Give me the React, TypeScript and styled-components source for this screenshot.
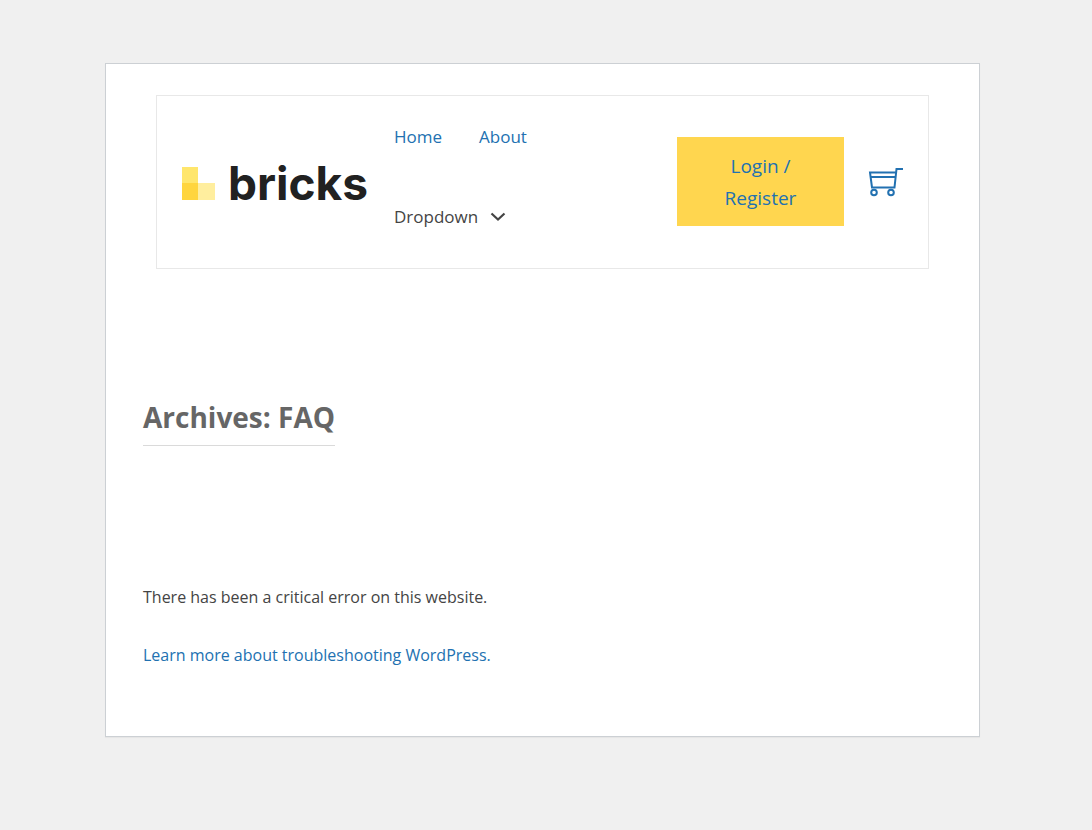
import React from "react";
import styled, { createGlobalStyle } from "styled-components";

const GlobalStyle = createGlobalStyle`
  * { box-sizing: border-box; }
  body {
    margin: 0;
    background: #f0f0f0;
    color: #444;
    font-family: "Segoe UI", "Open Sans", "Noto Sans", sans-serif;
    font-size: 17px;
    line-height: 28px;
  }
`;

const Page = styled.div`
  padding: 63px 112px 64px 105px;
`;

const Card = styled.div`
  background: #fff;
  border: 1px solid #ccd0d4;
  box-shadow: 0 1px 1px rgba(0, 0, 0, 0.04);
  padding: 31px 37px 67px;
`;

const Header = styled.header`
  display: flex;
  align-items: center;
  margin: 0 13px;
  padding: 0 25px;
  min-height: 174px;
  border: 1px solid #e8e8e8;
`;

const Link = styled.a`
  color: #2271b1;
  text-decoration: none;
`;

const Logo = styled(Link)`
  flex: none;
  display: block;
  height: 44px;
`;

const Nav = styled.nav`
  flex: 1;
  padding: 0 24px 10px;
`;

const Menu = styled.ul`
  display: flex;
  flex-wrap: wrap;
  column-gap: 37px;
  max-width: 200px;
  margin: 0;
  padding: 0;
  list-style: none;
  line-height: 80px;
`;

const DropdownToggle = styled.button`
  display: flex;
  align-items: center;
  gap: 12px;
  padding: 0;
  border: 0;
  background: none;
  color: inherit;
  font: inherit;
`;

const LoginButton = styled(Link)`
  flex: none;
  width: 167px;
  margin-bottom: 2px;
  padding: 13px 40px 12px;
  background: #ffd64f;
  font-size: 19px;
  line-height: 32px;
  text-align: center;
`;

const CartLink = styled(Link)`
  flex: none;
  display: block;
  height: 30px;
  margin-left: 24px;
`;

const Title = styled.h1`
  width: fit-content;
  margin: 124px 0 0;
  padding-bottom: 4px;
  border-bottom: 1px solid #dadada;
  color: #666;
  font-size: 28px;
  line-height: 48px;
`;

const Message = styled.main`
  margin-top: 137px;
  font-size: 16px;
`;

const Paragraph = styled.p`
  margin: 0 0 30px;

  &:last-child {
    margin-bottom: 0;
  }
`;

const BricksLogo = () => (
  <svg width="188" height="44" viewBox="0 0 188 44" overflow="visible" role="img" aria-label="bricks">
    <rect x="0" y="7" width="16" height="16" fill="#ffe66c" />
    <rect x="0" y="23" width="16" height="17" fill="#ffd53e" />
    <rect x="16" y="23" width="17" height="17" fill="#ffee9e" />
    <text x="46" y="40" fill="#212121" fontFamily="Inter, sans-serif" fontWeight="700" fontSize="46">
      bricks
    </text>
  </svg>
);

const Chevron = () => (
  <svg width="16" height="10" viewBox="0 0 16 10" aria-hidden="true">
    <path d="M1.500 1.500 8 7.500l6.500-6" fill="none" stroke="#444" strokeWidth="2.200" />
  </svg>
);

const CartIcon = () => (
  <svg width="35" height="30" viewBox="0 0 35 30" aria-hidden="true">
    <g fill="none" stroke="#2271b1" strokeWidth="2">
      <path d="M35 2h-6.500L26.500 20.500H4L2 5.500h26.500M2.500 10h25.500" />
      <circle cx="6" cy="25.500" r="2.800" />
      <circle cx="23" cy="25.500" r="2.800" />
    </g>
  </svg>
);

export default function App() {
  return (
    <>
      <GlobalStyle />
      <Page>
        <Card>
          <Header>
            <Logo href="#"><BricksLogo /></Logo>
            <Nav>
              <Menu>
                <li><Link href="#">Home</Link></li>
                <li><Link href="#">About</Link></li>
                <li>
                  <DropdownToggle type="button">Dropdown <Chevron /></DropdownToggle>
                </li>
              </Menu>
            </Nav>
            <LoginButton href="#">Login / Register</LoginButton>
            <CartLink href="#" aria-label="Cart"><CartIcon /></CartLink>
          </Header>
          <Title>Archives: FAQ</Title>
          <Message>
            <Paragraph>There has been a critical error on this website.</Paragraph>
            <Paragraph><Link href="#">Learn more about troubleshooting WordPress.</Link></Paragraph>
          </Message>
        </Card>
      </Page>
    </>
  );
}
